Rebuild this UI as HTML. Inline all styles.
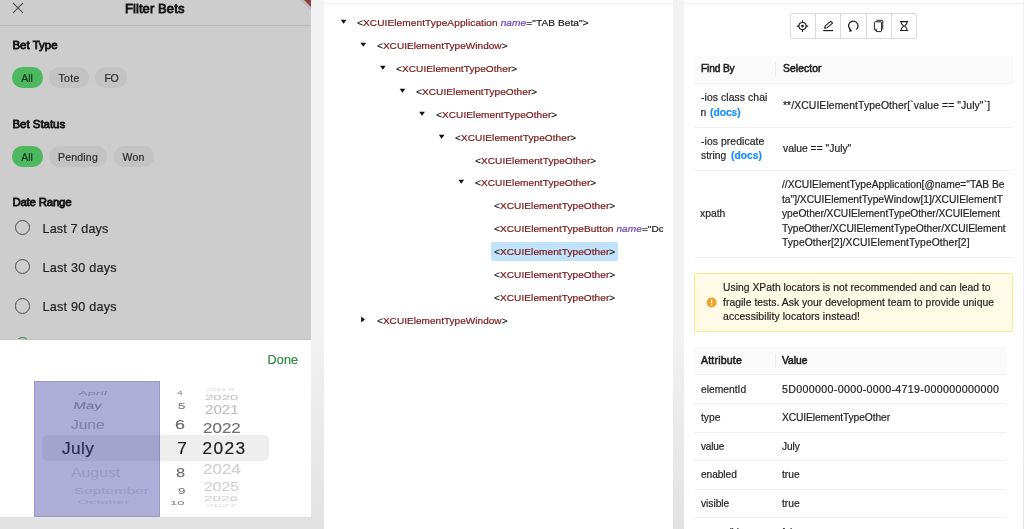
<!DOCTYPE html>
<html><head><meta charset="utf-8">
<style>
*{box-sizing:border-box;margin:0;padding:0}
html,body{width:1024px;height:529px;overflow:hidden;background:linear-gradient(to bottom,#f2f2f2 0,#f2f2f2 330px,#e2e2e2 529px);font-family:"Liberation Sans",sans-serif;color:#1f1f1f}
.a{position:absolute}
.t{position:absolute;white-space:nowrap;line-height:1;-webkit-text-stroke:0.2px}
#phone{left:0;top:0;width:311px;height:517px;background:#cdcdcd;overflow:hidden}
.chip{position:absolute;height:20.6px;border-radius:10.3px;background:#c3c3c3}
.chip.g{background:#4db860}
.radio{position:absolute;width:15.2px;height:15.2px;border:1.4px solid #4a4a4a;border-radius:50%}
.card{position:absolute;background:#fff;top:0;height:529px}
.arr{position:absolute;width:0;height:0;border-left:2.8px solid transparent;border-right:2.8px solid transparent;border-top:3.9px solid #111}
.arrr{position:absolute;width:0;height:0;border-top:3px solid transparent;border-bottom:3px solid transparent;border-left:3.7px solid #111}
.hl{position:absolute;height:1px;background:#f0f0f0}
</style></head><body>
<div id="root" style="position:absolute;left:0;top:0;width:1024px;height:529px;will-change:transform">
<div id="phone" class="a">
  <div class="a" style="left:0;top:25px;width:311px;height:1px;background:#b9b9b9"></div>
  <svg class="a" style="left:0;top:0" width="311" height="30"><path d="M13 3 L23 12.8 M23 3 L13 12.8" stroke="#555" stroke-width="1.1" fill="none"/>
  <polygon points="300,0 311,0 311,11" fill="#bdbdbd"/><polygon points="304,0 311,0 311,7" fill="#8f3b40"/></svg>
  <div class="chip g" style="left:12.2px;top:67.4px;width:30.7px"></div>
  <div class="chip" style="left:48.8px;top:67.4px;width:40.7px"></div>
  <div class="chip" style="left:95.4px;top:67.4px;width:32px"></div>
  <div class="chip g" style="left:12.2px;top:146.1px;width:30.7px"></div>
  <div class="chip" style="left:48.8px;top:146.1px;width:58.6px"></div>
  <div class="chip" style="left:113.5px;top:146.1px;width:40.5px"></div>
  <div class="radio" style="left:14.8px;top:220.2px"></div>
  <div class="radio" style="left:14.8px;top:259.3px"></div>
  <div class="radio" style="left:14.8px;top:298.4px"></div>
  <div class="radio" style="left:14.8px;top:336.6px;border-color:#2c7d3c;border-width:1.9px"></div>
  <div class="a" style="left:0;top:339px;width:311px;height:1px;background:#c3c3c3"></div>
  <div class="a" style="left:0;top:340px;width:311px;height:177px;background:#fff"></div>
  <div class="a" style="left:42px;top:435px;width:227px;height:26.3px;border-radius:5px;background:#eeeeef"></div>
  <div class="a" style="left:34px;top:381px;width:126px;height:136px;background:rgba(55,55,157,0.41);border:1px solid rgba(55,55,157,0.17)"></div>
<div class="t" style="font-size:13px;color:#141414;letter-spacing:0.099px;left:124.90px;top:2.00px;-webkit-text-stroke:0.8px #141414;">Filter Bets</div>
<div class="t" style="font-size:11.5px;color:#141414;letter-spacing:0.001px;left:12.40px;top:40.00px;-webkit-text-stroke:0.8px #141414;">Bet Type</div>
<div class="t" style="font-size:10.5px;color:#12351c;letter-spacing:0.032px;left:21.20px;top:73.00px;">All</div>
<div class="t" style="font-size:10.5px;color:#2a2a2a;letter-spacing:0.398px;left:58.40px;top:73.00px;">Tote</div>
<div class="t" style="font-size:10.5px;color:#2a2a2a;letter-spacing:-0.414px;left:104.60px;top:73.00px;">FO</div>
<div class="t" style="font-size:11.5px;color:#141414;letter-spacing:-0.023px;left:12.40px;top:119.00px;-webkit-text-stroke:0.8px #141414;">Bet Status</div>
<div class="t" style="font-size:10.5px;color:#12351c;letter-spacing:0.032px;left:21.20px;top:152.00px;">All</div>
<div class="t" style="font-size:10.5px;color:#2a2a2a;letter-spacing:0.201px;left:58.00px;top:152.00px;">Pending</div>
<div class="t" style="font-size:10.5px;color:#2a2a2a;letter-spacing:0.220px;left:122.50px;top:152.00px;">Won</div>
<div class="t" style="font-size:11.5px;color:#141414;letter-spacing:-0.242px;left:12.40px;top:197.00px;-webkit-text-stroke:0.8px #141414;">Date Range</div>
<div class="t" style="font-size:12.6px;color:#222;letter-spacing:0.139px;left:42.50px;top:223.00px;">Last 7 days</div>
<div class="t" style="font-size:12.6px;color:#222;letter-spacing:0.244px;left:42.50px;top:262.00px;">Last 30 days</div>
<div class="t" style="font-size:12.6px;color:#222;letter-spacing:0.244px;left:42.50px;top:301.00px;">Last 90 days</div>
<div class="t" style="font-size:12.6px;color:#2f8a42;letter-spacing:0.099px;left:267.60px;top:354.00px;">Done</div>
<div class="t" style="font-size:17.3px;color:#2b2b57;letter-spacing:0.403px;left:62.00px;top:440.00px;">July</div>
<div class="t" style="font-size:20px;color:#8080ab;left:71.00px;top:412px;transform-origin:0 17px;transform:translateY(-0.10px) scale(0.7746,0.6573);">June</div>
<div class="t" style="font-size:20px;color:#7474a0;left:72.55px;top:391px;transform-origin:0 17px;transform:translateY(0.50px) skewX(-10deg) scale(0.7476,0.4965);">May</div>
<div class="t" style="font-size:20px;color:#8585b3;left:77.60px;top:378px;transform-origin:0 17px;transform:translateY(0.40px) skewX(-12deg) scale(0.7178,0.2797);">April</div>
<div class="t" style="font-size:20px;color:#9a9ac8;left:71.00px;top:459px;transform-origin:0 17px;transform:translateY(0.50px) scale(0.7910,0.5944);">August</div>
<div class="t" style="font-size:20px;color:#9b9bc9;left:73.90px;top:477px;transform-origin:0 17px;transform:translateY(0.00px) scale(0.7650,0.4476);">September</div>
<div class="t" style="font-size:20px;color:#9c9cca;left:78.00px;top:487px;transform-origin:0 17px;transform:translateY(0.30px) scale(0.7233,0.2587);">October</div>
<div class="t" style="font-size:17.3px;color:#1b1b1b;left:177.30px;top:440.00px;">7</div>
<div class="t" style="font-size:20px;color:#6a6a6a;left:175.10px;top:412px;transform-origin:0 17px;transform:translateY(-0.10px) scale(0.9000,0.6364);">6</div>
<div class="t" style="font-size:20px;color:#777;left:177.60px;top:391px;transform-origin:0 17px;transform:translateY(0.50px) scale(0.6727,0.4965);">5</div>
<div class="t" style="font-size:20px;color:#8a8a8a;left:177.00px;top:378px;transform-origin:0 17px;transform:translateY(-0.20px) scale(0.5182,0.2378);">4</div>
<div class="t" style="font-size:20px;color:#6a6a6a;left:176.00px;top:459px;transform-origin:0 17px;transform:translateY(0.50px) scale(0.8182,0.6643);">8</div>
<div class="t" style="font-size:20px;color:#777;left:177.60px;top:477px;transform-origin:0 17px;transform:translateY(0.00px) scale(0.6727,0.4476);">9</div>
<div class="t" style="font-size:20px;color:#888;left:170.14px;top:488px;transform-origin:0 17px;transform:translateY(-0.40px) scale(0.6580,0.2378);">10</div>
<div class="t" style="font-size:17.3px;color:#1b1b1b;letter-spacing:1.389px;left:202.50px;top:440.00px;">2023</div>
<div class="t" style="font-size:20px;color:#707070;left:202.55px;top:416px;transform-origin:0 17px;transform:translateY(-0.40px) scale(0.8485,0.7552);">2022</div>
<div class="t" style="font-size:20px;color:#bdbdbd;left:205.24px;top:397px;transform-origin:0 17px;transform:translateY(0.10px) scale(0.7563,0.6154);">2021</div>
<div class="t" style="font-size:20px;color:#c2c2c2;left:204.65px;top:383px;transform-origin:0 17px;transform:translateY(0.00px) scale(0.7517,0.3986);">2020</div>
<div class="t" style="font-size:20px;color:#dcdcdc;left:206.35px;top:374px;transform-origin:0 17px;transform:translateY(0.20px) scale(0.6456,0.1538);">2019</div>
<div class="t" style="font-size:20px;color:#cfcfcf;left:202.55px;top:457px;transform-origin:0 17px;transform:translateY(-0.30px) scale(0.8485,0.6993);">2024</div>
<div class="t" style="font-size:20px;color:#cfcfcf;left:204.22px;top:474px;transform-origin:0 17px;transform:translateY(-0.30px) scale(0.7840,0.5944);">2025</div>
<div class="t" style="font-size:20px;color:#cfcfcf;left:204.03px;top:484px;transform-origin:0 17px;transform:translateY(0.20px) scale(0.7655,0.3986);">2026</div>
<div class="t" style="font-size:20px;color:#e0e0e0;left:206.12px;top:490px;transform-origin:0 17px;transform:translateY(-0.20px) scale(0.6848,0.1958);">2027</div>
</div>
<div class="card" id="mid" style="left:324px;width:349px"></div>
<div class="card" id="right" style="left:684px;width:338.5px"></div>
<div class="hl" style="left:324px;top:3px;width:349px"></div>
<div class="hl" style="left:684px;top:3px;width:338.5px"></div>
<div class="a" style="left:0;top:0;width:662.5px;height:529px;overflow:hidden">
  <div class="a" style="left:490.6px;top:241.8px;width:127.8px;height:19.6px;background:#c0e3fb;border-radius:2px"></div>
<svg class="a" style="left:0;top:0" width="700" height="529" fill="#111"><polygon points="340.80,19.70 346.50,19.70 343.65,23.70"/><polygon points="360.40,42.70 366.10,42.70 363.25,46.70"/><polygon points="380.00,65.70 385.70,65.70 382.85,69.70"/><polygon points="399.60,88.70 405.30,88.70 402.45,92.70"/><polygon points="419.20,111.70 424.90,111.70 422.05,115.70"/><polygon points="438.80,134.70 444.50,134.70 441.65,138.70"/><polygon points="458.40,179.70 464.10,179.70 461.25,183.70"/><polygon points="361.20,316.60 364.90,319.60 361.20,322.60"/></svg>
<div class="t" style="font-size:10px;letter-spacing:0.082px;left:357.20px;top:18px;transform-origin:0 8px;transform:scale(1.0107,0.98) rotate(0.02deg)"><span style="color:#1a1a1a;">&lt;</span><span style="color:#7a1515;">XCUIElementTypeApplication</span><span style="color:#1a1a1a;"> </span><span style="color:#6b40b8;font-style:italic;">name</span><span style="color:#1a1a1a;">="TAB Beta"&gt;</span></div>
<div class="t" style="font-size:10px;letter-spacing:0.026px;left:376.80px;top:41px;transform-origin:0 8px;transform:scale(1.0031,0.98) rotate(0.02deg)"><span style="color:#1a1a1a;">&lt;</span><span style="color:#7a1515;">XCUIElementTypeWindow</span><span style="color:#1a1a1a;">&gt;</span></div>
<div class="t" style="font-size:10px;letter-spacing:0.064px;left:396.40px;top:64px;transform-origin:0 8px;transform:scale(1.0079,0.98) rotate(0.02deg)"><span style="color:#1a1a1a;">&lt;</span><span style="color:#7a1515;">XCUIElementTypeOther</span><span style="color:#1a1a1a;">&gt;</span></div>
<div class="t" style="font-size:10px;letter-spacing:0.064px;left:416.00px;top:87px;transform-origin:0 8px;transform:scale(1.0079,0.98) rotate(0.02deg)"><span style="color:#1a1a1a;">&lt;</span><span style="color:#7a1515;">XCUIElementTypeOther</span><span style="color:#1a1a1a;">&gt;</span></div>
<div class="t" style="font-size:10px;letter-spacing:0.064px;left:435.60px;top:110px;transform-origin:0 8px;transform:scale(1.0079,0.98) rotate(0.02deg)"><span style="color:#1a1a1a;">&lt;</span><span style="color:#7a1515;">XCUIElementTypeOther</span><span style="color:#1a1a1a;">&gt;</span></div>
<div class="t" style="font-size:10px;letter-spacing:0.064px;left:455.20px;top:133px;transform-origin:0 8px;transform:scale(1.0079,0.98) rotate(0.02deg)"><span style="color:#1a1a1a;">&lt;</span><span style="color:#7a1515;">XCUIElementTypeOther</span><span style="color:#1a1a1a;">&gt;</span></div>
<div class="t" style="font-size:10px;letter-spacing:0.064px;left:474.80px;top:156px;transform-origin:0 8px;transform:scale(1.0079,0.98) rotate(0.02deg)"><span style="color:#1a1a1a;">&lt;</span><span style="color:#7a1515;">XCUIElementTypeOther</span><span style="color:#1a1a1a;">&gt;</span></div>
<div class="t" style="font-size:10px;letter-spacing:0.064px;left:474.80px;top:178px;transform-origin:0 8px;transform:scale(1.0079,0.98) rotate(0.02deg)"><span style="color:#1a1a1a;">&lt;</span><span style="color:#7a1515;">XCUIElementTypeOther</span><span style="color:#1a1a1a;">&gt;</span></div>
<div class="t" style="font-size:10px;letter-spacing:0.064px;left:494.40px;top:201px;transform-origin:0 8px;transform:scale(1.0079,0.98) rotate(0.02deg)"><span style="color:#1a1a1a;">&lt;</span><span style="color:#7a1515;">XCUIElementTypeOther</span><span style="color:#1a1a1a;">&gt;</span></div>
<div class="t" style="font-size:10px;letter-spacing:0.064px;left:494.40px;top:247px;transform-origin:0 8px;transform:scale(1.0079,0.98) rotate(0.02deg)"><span style="color:#1a1a1a;">&lt;</span><span style="color:#7a1515;">XCUIElementTypeOther</span><span style="color:#1a1a1a;">&gt;</span></div>
<div class="t" style="font-size:10px;letter-spacing:0.064px;left:494.40px;top:270px;transform-origin:0 8px;transform:scale(1.0079,0.98) rotate(0.02deg)"><span style="color:#1a1a1a;">&lt;</span><span style="color:#7a1515;">XCUIElementTypeOther</span><span style="color:#1a1a1a;">&gt;</span></div>
<div class="t" style="font-size:10px;letter-spacing:0.064px;left:494.40px;top:293px;transform-origin:0 8px;transform:scale(1.0079,0.98) rotate(0.02deg)"><span style="color:#1a1a1a;">&lt;</span><span style="color:#7a1515;">XCUIElementTypeOther</span><span style="color:#1a1a1a;">&gt;</span></div>
<div class="t" style="font-size:10px;letter-spacing:0.067px;left:494.40px;top:224px;transform-origin:0 8px;transform:scale(1.0084,0.98) rotate(0.02deg)"><span style="color:#1a1a1a;">&lt;</span><span style="color:#7a1515;">XCUIElementTypeButton</span><span style="color:#1a1a1a;"> </span><span style="color:#6b40b8;font-style:italic;">name</span><span style="color:#1a1a1a;">="Done"&gt;</span></div>
<div class="t" style="font-size:10px;letter-spacing:0.026px;left:376.80px;top:316px;transform-origin:0 8px;transform:scale(1.0031,0.98) rotate(0.02deg)"><span style="color:#1a1a1a;">&lt;</span><span style="color:#7a1515;">XCUIElementTypeWindow</span><span style="color:#1a1a1a;">&gt;</span></div>
</div>
<!-- right panel -->
<div class="a" style="left:790px;top:13px;width:127px;height:26px;border:1px solid #d9d9d9;border-radius:2px;background:#fff"></div>
<div class="a" style="left:815px;top:13px;width:1px;height:26px;background:#d9d9d9"></div>
<div class="a" style="left:840px;top:13px;width:1px;height:26px;background:#d9d9d9"></div>
<div class="a" style="left:866px;top:13px;width:1px;height:26px;background:#d9d9d9"></div>
<div class="a" style="left:891px;top:13px;width:1px;height:26px;background:#d9d9d9"></div>
<svg class="a" style="left:780px;top:5px" width="150" height="45" viewBox="0 0 150 45">
 <g fill="none" stroke="#1c1c1c" stroke-width="1.2">
  <!-- aim (center 802.5,26.1 => 22.5,21.1) -->
  <circle cx="22.5" cy="21.1" r="3.55" stroke-width="1.1"/><circle cx="22.5" cy="21.1" r="1.35" fill="#1c1c1c" stroke="none"/>
  <path d="M22.5 15.3v2.3M22.5 24.6v2.3M16.8 21.1h2.3M25.9 21.1h2.3" stroke-width="1.1"/>
  <!-- edit -->
  <path d="M43.2 25.6h9.8" stroke-width="1.15"/>
  <path d="M44.6 23.3l0.6-2.5 5.5-4.5 1.9 1.9-5.5 4.5z" stroke-width="1.05" stroke-linejoin="round"/>
  <!-- undo (center 853.4,25.9 => 73.4,20.9) -->
  <path d="M70.9 24.9a4.7 4.7 0 1 1 5.3-0.3" stroke-width="1.25"/>
  <path d="M69.9 24.1l2.0 1.9-2.4 0.5z" fill="#1c1c1c" stroke-width="0.5"/>
  <!-- copy -->
  <path d="M96.3 15.5h5.5q0.9 0 0.9 0.9v8.2" stroke-width="1.3" stroke="#555"/>
  <path d="M94.4 17.5q0-0.7 0.7-0.7h5.7q0.7 0 0.7 0.7v8.4q0 0.7-0.7 0.7h-4.2l-2.2-2.2z" stroke-width="0.95" fill="#fff"/>
  <path d="M94.6 24.2h1.9v2.2" stroke-width="0.8"/>
  <!-- hourglass -->
  <path d="M120 16.6h8.2M120 25.5h8.2" stroke-width="1.15"/>
  <path d="M121.4 16.8v1.8l2.2 2.45-2.2 2.45v1.8M126.8 16.8v1.8l-2.2 2.45 2.2 2.45v1.8" stroke-width="1.05"/>
 </g>
</svg>
<!-- find-by table -->
<div class="a" style="left:694px;top:56px;width:319px;height:28px;background:#fafafa;border-bottom:1px solid #f0f0f0"></div>
<div class="a" style="left:775px;top:62px;width:1px;height:14.6px;background:#ececec"></div>
<div class="hl" style="left:694px;top:127px;width:319px"></div>
<div class="hl" style="left:694px;top:170px;width:319px"></div>
<div class="hl" style="left:694px;top:256.6px;width:319px"></div>
<!-- alert -->
<div class="a" style="left:694px;top:273.2px;width:319px;height:58.4px;background:#fffbe6;border:1px solid #ffe58f;border-radius:1.5px"></div>
<svg class="a" style="left:706.1px;top:297px" width="12" height="12" viewBox="0 0 12 12"><circle cx="5.6" cy="5.5" r="5.0" fill="#f0a22e"/><path d="M5.6 2.8v3.4" stroke="#fff" stroke-width="1.2"/><circle cx="5.6" cy="7.9" r="0.7" fill="#fff"/></svg>
<!-- attribute table -->
<div class="a" style="left:694px;top:347px;width:312.3px;height:28px;background:#fafafa;border-bottom:1px solid #f0f0f0"></div>
<div class="a" style="left:775.3px;top:353px;width:1px;height:15px;background:#ececec"></div>
<div class="hl" style="left:694px;top:403.2px;width:312.3px"></div>
<div class="hl" style="left:694px;top:431.8px;width:312.3px"></div>
<div class="hl" style="left:694px;top:460.4px;width:312.3px"></div>
<div class="hl" style="left:694px;top:489px;width:312.3px"></div>
<div class="hl" style="left:694px;top:517.4px;width:312.3px"></div>
<div class="t" style="font-size:10.3px;color:#1f1f1f;letter-spacing:-0.128px;left:700.60px;top:64px;transform-origin:0 8px;transform:scaleX(0.9859) rotate(0.02deg);-webkit-text-stroke:0.55px #1f1f1f;">Find By</div>
<div class="t" style="font-size:10.3px;color:#1f1f1f;letter-spacing:0.056px;left:782.50px;top:64px;transform-origin:0 8px;transform:scaleX(1.0068) rotate(0.02deg);-webkit-text-stroke:0.55px #1f1f1f;">Selector</div>
<div class="t" style="font-size:10.3px;color:#1f1f1f;letter-spacing:0.073px;left:700.60px;top:93px;transform-origin:0 8px;transform:scaleX(1.0107) rotate(0.02deg);">-ios class chai</div>
<div class="t" style="font-size:10.3px;color:#1f1f1f;left:700.60px;top:108.00px;">n </div>
<div class="t" style="font-size:10.3px;color:#1890ff;font-weight:bold;letter-spacing:-0.019px;left:709.70px;top:108px;transform-origin:0 8px;transform:scaleX(0.9979) rotate(0.02deg);">(docs)</div>
<div class="t" style="font-size:10.3px;color:#1f1f1f;letter-spacing:0.075px;left:782.50px;top:101px;transform-origin:0 8px;transform:scaleX(1.0102) rotate(0.02deg);">**/XCUIElementTypeOther[`value == "July"`]</div>
<div class="t" style="font-size:10.3px;color:#1f1f1f;letter-spacing:0.065px;left:700.60px;top:137px;transform-origin:0 8px;transform:scaleX(1.0091) rotate(0.02deg);">-ios predicate</div>
<div class="t" style="font-size:10.3px;color:#1f1f1f;letter-spacing:-0.006px;left:700.60px;top:151px;transform-origin:0 8px;transform:scaleX(0.9992) rotate(0.02deg);">string</div>
<div class="t" style="font-size:10.3px;color:#1890ff;font-weight:bold;letter-spacing:-0.007px;left:730.50px;top:151px;transform-origin:0 8px;transform:scaleX(0.9992) rotate(0.02deg);">(docs)</div>
<div class="t" style="font-size:10.3px;color:#1f1f1f;letter-spacing:0.012px;left:782.50px;top:144px;transform-origin:0 8px;transform:scaleX(1.0016) rotate(0.02deg);">value == "July"</div>
<div class="t" style="font-size:10.3px;color:#1f1f1f;letter-spacing:0.006px;left:700.20px;top:209px;transform-origin:0 8px;transform:scaleX(1.0006) rotate(0.02deg);">xpath</div>
<div class="t" style="font-size:10.3px;color:#1f1f1f;letter-spacing:-0.027px;left:782.00px;top:180px;transform-origin:0 8px;transform:scaleX(0.9968) rotate(0.02deg);">//XCUIElementTypeApplication[@name="TAB Be</div>
<div class="t" style="font-size:10.3px;color:#1f1f1f;letter-spacing:-0.019px;left:782.00px;top:195px;transform-origin:0 8px;transform:scaleX(0.9977) rotate(0.02deg);">ta"]/XCUIElementTypeWindow[1]/XCUIElementT</div>
<div class="t" style="font-size:10.3px;color:#1f1f1f;letter-spacing:-0.041px;left:782.00px;top:209px;transform-origin:0 8px;transform:scaleX(0.9950) rotate(0.02deg);">ypeOther/XCUIElementTypeOther/XCUIElement</div>
<div class="t" style="font-size:10.3px;color:#1f1f1f;letter-spacing:-0.044px;left:782.00px;top:224px;transform-origin:0 8px;transform:scaleX(0.9948) rotate(0.02deg);">TypeOther/XCUIElementTypeOther/XCUIElement</div>
<div class="t" style="font-size:10.3px;color:#1f1f1f;letter-spacing:0.056px;left:782.00px;top:238px;transform-origin:0 8px;transform:scaleX(1.0071) rotate(0.02deg);">TypeOther[2]/XCUIElementTypeOther[2]</div>
<div class="t" style="font-size:10.3px;color:#1f1f1f;letter-spacing:0.022px;left:723.30px;top:283px;transform-origin:0 8px;transform:scaleX(1.0029) rotate(0.02deg);">Using XPath locators is not recommended and can lead to</div>
<div class="t" style="font-size:10.3px;color:#1f1f1f;letter-spacing:0.039px;left:723.30px;top:298px;transform-origin:0 8px;transform:scaleX(1.0056) rotate(0.02deg);">fragile tests. Ask your development team to provide unique</div>
<div class="t" style="font-size:10.3px;color:#1f1f1f;letter-spacing:0.083px;left:723.30px;top:312px;transform-origin:0 8px;transform:scaleX(1.0127) rotate(0.02deg);">accessibility locators instead!</div>
<div class="t" style="font-size:10.3px;color:#1f1f1f;letter-spacing:0.181px;left:700.70px;top:356px;transform-origin:0 8px;transform:scaleX(1.0257) rotate(0.02deg);-webkit-text-stroke:0.55px #1f1f1f;">Attribute</div>
<div class="t" style="font-size:10.3px;color:#1f1f1f;letter-spacing:-0.007px;left:782.10px;top:356px;transform-origin:0 8px;transform:scaleX(0.9993) rotate(0.02deg);-webkit-text-stroke:0.55px #1f1f1f;">Value</div>
<div class="t" style="font-size:10.3px;color:#1f1f1f;letter-spacing:-0.007px;left:700.70px;top:385px;transform-origin:0 8px;transform:scaleX(0.9992) rotate(0.02deg);">elementId</div>
<div class="t" style="font-size:10.3px;color:#1f1f1f;letter-spacing:0.302px;left:782.10px;top:385px;transform-origin:0 8px;transform:scaleX(1.0367) rotate(0.02deg);">5D000000-0000-0000-4719-000000000000</div>
<div class="t" style="font-size:10.3px;color:#1f1f1f;letter-spacing:-0.007px;left:700.70px;top:413px;transform-origin:0 8px;transform:scaleX(0.9993) rotate(0.02deg);">type</div>
<div class="t" style="font-size:10.3px;color:#1f1f1f;letter-spacing:-0.077px;left:782.10px;top:413px;transform-origin:0 8px;transform:scaleX(0.9913) rotate(0.02deg);">XCUIElementTypeOther</div>
<div class="t" style="font-size:10.3px;color:#1f1f1f;letter-spacing:-0.197px;left:700.70px;top:442px;transform-origin:0 8px;transform:scaleX(0.9793) rotate(0.02deg);">value</div>
<div class="t" style="font-size:10.3px;color:#1f1f1f;letter-spacing:-0.114px;left:782.10px;top:442px;transform-origin:0 8px;transform:scaleX(0.9883) rotate(0.02deg);">July</div>
<div class="t" style="font-size:10.3px;color:#1f1f1f;letter-spacing:-0.083px;left:700.70px;top:470px;transform-origin:0 8px;transform:scaleX(0.9911) rotate(0.02deg);">enabled</div>
<div class="t" style="font-size:10.3px;color:#1f1f1f;letter-spacing:-0.023px;left:782.10px;top:470px;transform-origin:0 8px;transform:scaleX(0.9974) rotate(0.02deg);">true</div>
<div class="t" style="font-size:10.3px;color:#1f1f1f;letter-spacing:-0.029px;left:700.70px;top:499px;transform-origin:0 8px;transform:scaleX(0.9960) rotate(0.02deg);">visible</div>
<div class="t" style="font-size:10.3px;color:#1f1f1f;letter-spacing:-0.023px;left:782.10px;top:499px;transform-origin:0 8px;transform:scaleX(0.9974) rotate(0.02deg);">true</div>
<div class="t" style="font-size:10.3px;color:#1f1f1f;letter-spacing:-0.351px;left:700.70px;top:528px;transform-origin:0 8px;transform:scaleX(0.9582) rotate(0.02deg);">accessible</div>
<div class="t" style="font-size:10.3px;color:#1f1f1f;letter-spacing:-0.172px;left:782.10px;top:528px;transform-origin:0 8px;transform:scaleX(0.9796) rotate(0.02deg);">false</div>
</div>
</body></html>
